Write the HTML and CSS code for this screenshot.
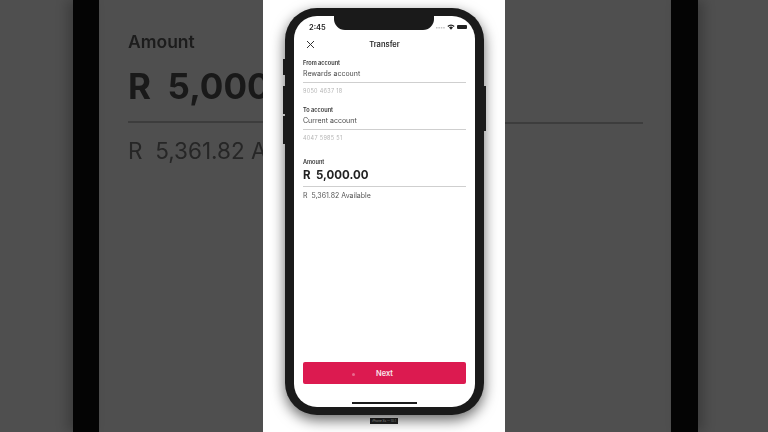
FILE: index.html
```html
<!DOCTYPE html>
<html lang="en">
<head>
  <meta charset="UTF-8">
  <title>Transfer</title>
  <link rel="stylesheet" href="styles.css">
</head>
<body>
  <div class="stage">
    <div class="side side-left">
      <div class="side-bar"></div>
      <div class="side-content">
        <p class="big-label">Amount</p>
        <p class="big-amount">R&nbsp;&nbsp;5,000.00</p>
        <div class="big-line"></div>
        <p class="big-available">R&nbsp;&nbsp;5,361.82 Available</p>
      </div>
    </div>

    <div class="center">
      <div class="phone">
        <span class="phone-btn btn-mute"></span>
        <span class="phone-btn btn-up"></span>
        <span class="phone-btn btn-down"></span>
        <span class="phone-btn btn-power"></span>
        <div class="screen">
          <div class="notch"></div>
          <div class="status">
            <span class="time">2:45</span>
            <span class="status-icons">
              <svg class="signal" width="9" height="3" viewBox="0 0 9 3"><g fill="#c4c4c4"><rect x="0" y="1" width="1.5" height="1.5"/><rect x="2.4" y="1" width="1.5" height="1.5"/><rect x="4.8" y="1" width="1.5" height="1.5"/><rect x="7.2" y="1" width="1.5" height="1.5"/></g></svg>
              <svg width="8" height="6" viewBox="0 0 8 6"><path d="M0.4 2A5 5 0 0 1 7.6 2L6.7 3A3.7 3.7 0 0 0 1.3 3ZM2 3.6A2.7 2.7 0 0 1 6 3.6L4 5.8Z" fill="#222"/></svg>
              <span class="battery"></span>
            </span>
          </div>
          <div class="nav">
            <svg class="close" width="9" height="9" viewBox="0 0 9 9"><path d="M1 1L8 8M8 1L1 8" stroke="#333" stroke-width="1" fill="none"/></svg>
            <span class="nav-title">Transfer</span>
          </div>
          <div class="form">
            <div class="field">
              <p class="label">From account</p>
              <p class="value">Rewards account</p>
              <p class="number">9050 4637 18</p>
            </div>
            <div class="field">
              <p class="label">To account</p>
              <p class="value">Current account</p>
              <p class="number">4047 5985 51</p>
            </div>
            <div class="field field-amount">
              <p class="label">Amount</p>
              <p class="amount">R&nbsp;&nbsp;5,000.00</p>
              <p class="available">R&nbsp;&nbsp;5,361.82 Available</p>
            </div>
          </div>
          <div class="footer">
            <div class="next-btn">Next<span class="cursor"></span></div>
            <div class="home-bar"></div>
          </div>
        </div>
      </div>
      <div class="device-tag">iPhone Xs — 10:1</div>
    </div>

    <div class="side side-right">
      <div class="side-content"><div class="big-line line-right"></div></div>
      <div class="side-bar"></div>
    </div>
  </div>
</body>
</html>
```

FILE: styles.css
```css
* {
  box-sizing: border-box;
}
html, body {
  margin: 0;
  height: 432px;
  overflow: hidden;
}
body {
  font-family: Inter, "Liberation Sans", sans-serif;
  background: #4f4f4f;
}
p {
  margin: 0;
}
.stage {
  display: grid;
  grid-template-columns: 263px 242px 263px;
  height: 432px;
}

/* blurred copy of the screen behind the phone */
.side {
  display: flex;
  overflow: hidden;
  min-width: 0;
  background: #4f4f4f;
}
.side-left {
  padding-left: 73px;
}
.side-right {
  padding-right: 70px;
}
.side-bar {
  flex: none;
  width: 26px;
  background: #040404;
}
.side-left .side-bar {
  box-shadow: -6px 0 12px rgba(0, 0, 0, 0.22);
}
.side-right .side-bar {
  width: 27px;
  box-shadow: 6px 0 12px rgba(0, 0, 0, 0.22);
}
.side-content {
  flex: 1;
  min-width: 0;
  white-space: nowrap;
  color: #191919;
  filter: blur(0.5px);
}
.side-left .side-content {
  padding: 32px 0 0 29px;
}
.side-right .side-content {
  padding-top: 122px;
}
.big-label {
  font-size: 17.5px;
  line-height: 20px;
  font-weight: 600;
  color: #1c1c1c;
}
.big-amount {
  margin-top: 12px;
  font-size: 35px;
  line-height: 44px;
  font-weight: 700;
}
.big-line {
  height: 2px;
  margin-top: 13px;
  background: #3d3d3d;
}
.line-right {
  margin-top: 0;
  width: 138px;
}
.big-available {
  margin-top: 14px;
  font-size: 22.5px;
  line-height: 28px;
  color: #262626;
}

.center {
  background: #fff;
  padding: 8px 0 0 22px;
}
.phone {
  position: relative;
  width: 199px;
  height: 407px;
  padding: 8px 9px;
  background: #1a1a1a;
  border-radius: 32px;
  box-shadow: 0 5px 14px rgba(0, 0, 0, 0.6);
  filter: blur(0.35px);
}
.phone-btn {
  position: absolute;
  width: 2px;
  background: #1a1a1a;
}
.btn-mute {
  left: -2px;
  top: 51px;
  height: 16px;
}
.btn-up {
  left: -2px;
  top: 78px;
  height: 28px;
}
.btn-down {
  left: -2px;
  top: 108px;
  height: 28px;
}
.btn-power {
  right: -2px;
  top: 78px;
  height: 45px;
}
.screen {
  position: relative;
  display: flex;
  flex-direction: column;
  height: 100%;
  background: #fff;
  border-radius: 23px;
  overflow: hidden;
}
.notch {
  position: absolute;
  left: 40px;
  top: 0;
  width: 100px;
  height: 14px;
  background: #1a1a1a;
  border-radius: 0 0 11px 11px;
}
.status {
  display: flex;
  justify-content: space-between;
  align-items: center;
  height: 20px;
  padding: 2px 8px 0 15px;
}
.time {
  font-size: 7.5px;
  font-weight: 600;
  color: #222;
}
.status-icons {
  display: flex;
  align-items: center;
  gap: 2px;
}
.battery {
  width: 10px;
  height: 4px;
  border-radius: 1px;
  background: #222;
}
.nav {
  position: relative;
  display: flex;
  justify-content: center;
  align-items: center;
  height: 16px;
  padding-top: 1px;
}
.close {
  position: absolute;
  left: 12px;
  top: 4px;
}
.nav-title {
  font-size: 7.5px;
  font-weight: 600;
  color: #2a2a2a;
}
.form {
  flex: 1;
  padding: 7px 9px 0;
}
.field {
  height: 47px;
}
.field-amount {
  margin-top: 5px;
}
.label {
  font-size: 5.6px;
  line-height: 8px;
  font-weight: 600;
  color: #333;
}
.value {
  margin-top: 1px;
  padding-bottom: 3px;
  font-size: 7px;
  line-height: 11px;
  border-bottom: 1px solid #cfcfcf;
  color: #4a4a4a;
}
.number {
  margin-top: 4px;
  font-size: 5.5px;
  line-height: 8px;
  letter-spacing: 0.3px;
  color: #b5b5b5;
}
.amount {
  margin-top: 1px;
  padding-bottom: 2px;
  font-size: 11.5px;
  line-height: 17px;
  font-weight: 700;
  border-bottom: 1px solid #cfcfcf;
  color: #222;
}
.available {
  margin-top: 4px;
  font-size: 7px;
  line-height: 10px;
  color: #555;
}
.footer {
  display: flex;
  flex-direction: column;
  align-items: center;
  padding: 0 9px 3px;
}
.next-btn {
  position: relative;
  width: 100%;
  height: 22px;
  padding-top: 1px;
  line-height: 22px;
  text-align: center;
  font-size: 7.5px;
  font-weight: 600;
  color: #f8e6eb;
  background: #dc1a50;
  border-radius: 2px;
}
.cursor {
  position: absolute;
  left: 49px;
  top: 11px;
  width: 3px;
  height: 3px;
  border-radius: 50%;
  background: rgba(255, 255, 255, 0.35);
}
.home-bar {
  width: 65px;
  height: 2px;
  margin-top: 18px;
  background: #1c1c1c;
}
.device-tag {
  width: 28px;
  height: 6px;
  margin: 3px 0 0 85px;
  background: #222;
  color: #bbb;
  font-size: 3px;
  line-height: 6px;
  text-align: center;
  white-space: nowrap;
  overflow: hidden;
}
```
